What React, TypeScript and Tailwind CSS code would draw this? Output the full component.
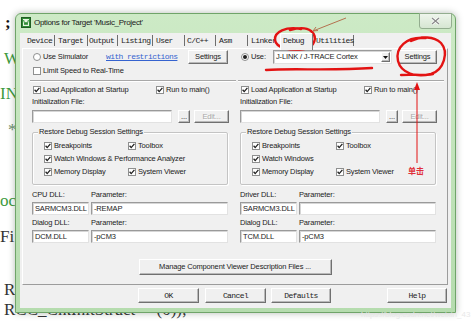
import React from 'react';

const ui = "font-['Liberation_Sans'] text-[7.5px] tracking-[-0.15px] leading-none text-[#1c1c1c] whitespace-nowrap";
const mono = "font-['Liberation_Mono'] text-[8px] tracking-[-0.6px] leading-none text-[#1c1c1c] whitespace-nowrap";
const raised =
  'bg-[#f0f0f0] border border-t-white border-l-white border-r-[#707070] border-b-[#707070] shadow-[inset_-1px_-1px_0_#b9b9b9]';
const sunken =
  'bg-white border border-t-[#9a9a9a] border-l-[#9a9a9a] border-r-[#e2e2e2] border-b-[#e2e2e2] shadow-[inset_1px_1px_0_#d6d6d6]';

function Check() {
  return (
    <span className="flex h-[8px] w-[8px] shrink-0 items-center justify-center border border-[#8e8f8f] bg-white">
      <svg width="6" height="6" viewBox="0 0 6 6">
        <path d="M0.6 2.8 L2.2 4.6 L5.4 0.9" fill="none" stroke="#1f1f1f" strokeWidth="1.3" />
      </svg>
    </span>
  );
}

function Box() {
  return <span className="h-[8px] w-[8px] shrink-0 border border-[#8e8f8f] bg-white" />;
}

function Radio({ on = false }: { on?: boolean }) {
  return (
    <span className="flex h-[8px] w-[8px] shrink-0 items-center justify-center rounded-full border border-[#8e8f8f] bg-white">
      {on && <span className="h-[4px] w-[4px] rounded-full bg-[#1f1f1f]" />}
    </span>
  );
}

function CheckLabel({ children }: { children: React.ReactNode }) {
  return (
    <div className="flex h-[10px] items-center">
      <Check />
      <span className={`${ui} ml-[2px]`}>{children}</span>
    </div>
  );
}

function Button({ className = '', children, text = ui }: { className?: string; children: React.ReactNode; text?: string }) {
  return (
    <div className={`${raised} flex shrink-0 items-center justify-center ${className}`}>
      <span className={text}>{children}</span>
    </div>
  );
}

function Panel({ right = false }: { right?: boolean }) {
  return (
    <div className="flex w-[198px] flex-col">
      {right ? (
        <div className="mt-[1px] flex h-[14px] items-center">
          <span className="ml-[1px]">
            <Radio on />
          </span>
          <span className={`${ui} ml-[2px] w-[22px]`}>Use:</span>
          <div className={`${sunken} flex h-[14px] w-[119px] items-center`}>
            <span className={`${ui} ml-[2px]`}>J-LINK / J-TRACE Cortex</span>
            <span className={`${raised} ml-auto mr-[1px] flex h-[10px] w-[9px] items-center justify-center`}>
              <svg width="5" height="3" viewBox="0 0 5 3">
                <path d="M0 0h5L2.5 3z" fill="#111" />
              </svg>
            </span>
          </div>
          <Button className="ml-[6px] h-[14px] w-[39px]">Settings</Button>
        </div>
      ) : (
        <div className="mt-[1px] flex h-[14px] items-center">
          <span className="ml-[1px]">
            <Radio />
          </span>
          <span className={`${ui} ml-[2px] w-[63px]`}>Use Simulator</span>
          <span className={`${mono} w-[82px] text-[#3563cf] underline`}>with restrictions</span>
          <Button className="h-[14px] w-[40px]">Settings</Button>
        </div>
      )}

      <div className="mt-[2px] flex h-[10px] items-center pl-[1px]">
        {!right && (
          <>
            <Box />
            <span className={`${ui} ml-[2px]`}>Limit Speed to Real-Time</span>
          </>
        )}
      </div>

      <div className="-ml-[2px] mt-[4px] h-[2px] w-[206px] border-t border-b border-t-[#a8a8a8] border-b-white" />

      <div className="mt-[3px] flex h-[10px] items-center pl-[1px]">
        <div className="w-[123px]">
          <CheckLabel>Load Application at Startup</CheckLabel>
        </div>
        <CheckLabel>Run to main()</CheckLabel>
      </div>

      <div className="mt-[2px] flex h-[10px] items-center">
        <span className={ui}>Initialization File:</span>
      </div>

      <div className="mt-[3px] flex h-[13px]">
        <div className={`${sunken} h-[13px] w-[140px]`} />
        <Button className="ml-[6px] h-[13px] w-[12px]">...</Button>
        <Button className="ml-[4px] h-[13px] w-[35px]" text={`${ui} text-[#a8a8a8] [text-shadow:1px_1px_0_#fff]`}>
          Edit...
        </Button>
      </div>

      <div className="relative mt-[9px] w-[196px] rounded-[2px] border border-[#c4c4c4] pb-[7px] pl-[11px] pt-[8px] shadow-[inset_1px_1px_0_#fff,1px_1px_0_#fff]">
        <span className={`${ui} absolute -top-[5px] left-[5px] bg-[#f0f0f0] px-[1px]`}>Restore Debug Session Settings</span>
        <div className="flex">
          <div className="w-[84px]">
            <CheckLabel>Breakpoints</CheckLabel>
          </div>
          <CheckLabel>Toolbox</CheckLabel>
        </div>
        <div className="mt-[3px]">
          <CheckLabel>{right ? 'Watch Windows' : 'Watch Windows & Performance Analyzer'}</CheckLabel>
        </div>
        <div className="mt-[3px] flex">
          <div className="w-[84px]">
            <CheckLabel>Memory Display</CheckLabel>
          </div>
          <CheckLabel>System Viewer</CheckLabel>
        </div>
      </div>

      <div className="mt-[5px] flex h-[10px] items-center">
        <span className={`${ui} w-[59px]`}>{right ? 'Driver DLL:' : 'CPU DLL:'}</span>
        <span className={ui}>Parameter:</span>
      </div>
      <div className="mt-[2px] flex h-[13px]">
        <div className={`${sunken} flex w-[57px] items-center pl-[2px]`}>
          <span className={ui}>SARMCM3.DLL</span>
        </div>
        <div className={`${sunken} ml-[2px] flex w-[137px] items-center pl-[2px]`}>
          <span className={ui}>{right ? '' : '-REMAP'}</span>
        </div>
      </div>

      <div className="mt-[3px] flex h-[10px] items-center">
        <span className={`${ui} w-[59px]`}>Dialog DLL:</span>
        <span className={ui}>Parameter:</span>
      </div>
      <div className="mt-[2px] flex h-[13px]">
        <div className={`${sunken} flex w-[57px] items-center pl-[2px]`}>
          <span className={ui}>{right ? 'TCM.DLL' : 'DCM.DLL'}</span>
        </div>
        <div className={`${sunken} ml-[2px] flex w-[137px] items-center pl-[2px]`}>
          <span className={ui}>-pCM3</span>
        </div>
      </div>
    </div>
  );
}

const tabs: { label: string; cls: string }[] = [
  { label: 'Device', cls: 'w-[29px] pl-[1px]' },
  { label: 'Target', cls: 'w-[33px] pl-[3px]' },
  { label: 'Output', cls: 'w-[30px] pl-[1px]' },
  { label: 'Listing', cls: 'w-[35px] pl-[3px]' },
  { label: 'User', cls: 'w-[32px] pl-[3px]' },
  { label: 'C/C++', cls: 'w-[31px] pl-[2px]' },
  { label: 'Asm', cls: 'w-[32px] pl-[3px]' },
];

function Dialog() {
  return (
    <div className="absolute left-[15px] top-[13px] flex h-[300px] w-[441px] flex-col rounded-t-[6px] border border-[#6fa469] bg-gradient-to-b from-[#cdeac6] to-[#b5dcae] shadow-[0_0_7px_rgba(40,60,40,0.35)]">
      {/* title bar */}
      <div className="flex h-[19px] items-start">
        <svg className="ml-[5px] mt-[3px]" width="10" height="11" viewBox="0 0 10 11">
          <rect x="0.5" y="0.5" width="9" height="10" fill="#2f8b34" stroke="#1f5e22" />
          <rect x="2" y="2" width="6" height="7" fill="#e9f6e4" />
          <path d="M2.6 3 L4 8 L5 5 L6 8 L7.4 3" fill="none" stroke="#2f8b34" strokeWidth="1" />
        </svg>
        <span className="ml-[3px] mt-[5px] whitespace-nowrap font-['Liberation_Sans'] text-[8px] leading-none tracking-[-0.3px] text-[#1a1a1a]">
          Options for Target 'Music_Project'
        </span>
        <div className="-mt-[1px] ml-auto mr-[3px] flex h-[16px] w-[33px] items-center justify-center rounded-b-[3px] border border-[#93ad8f] bg-gradient-to-b from-[#eef5ec] to-[#d6e6d2]">
          <svg width="9" height="8" viewBox="0 0 9 8">
            <path d="M1 1 L8 7 M8 1 L1 7" stroke="#ffffff" strokeWidth="2.6" />
            <path d="M1 1 L8 7 M8 1 L1 7" stroke="#8a8a8a" strokeWidth="1.3" />
          </svg>
        </div>
      </div>

      {/* client */}
      <div className="mx-[4px] flex h-[275px] flex-col bg-[#f0f0f0]">
        <div className="flex h-[15px] items-center pl-[6px]">
          {tabs.map((t) => (
            <div key={t.label} className={`flex h-[11px] items-center border-r border-[#6e6e6e] ${t.cls}`}>
              <span className={mono}>{t.label}</span>
            </div>
          ))}
          <div className="flex h-[11px] w-[32px] items-center pl-[3px]">
            <span className={mono}>Linker</span>
          </div>
          <div className="relative z-10 -mb-[2px] flex h-[17px] w-[33px] items-center self-end rounded-t-[2px] border-t border-l border-r border-t-white border-l-white border-r-[#7a7a7a] bg-[#f0f0f0] pb-[2px] pl-[2px]">
            <span className={mono}>Debug</span>
          </div>
          <div className="flex h-[11px] w-[41px] items-center border-r border-[#6e6e6e] pl-[3px]">
            <span className={mono}>Utilities</span>
          </div>
        </div>

        <div className="ml-[2px] flex h-[237px] w-[426px] flex-col border border-t-white border-l-white border-r-[#9c9c9c] border-b-[#9c9c9c]">
          <div className="flex gap-[10px] pl-[9px]">
            <Panel />
            <Panel right />
          </div>
          <Button className="mx-auto mt-[16px] h-[16px] w-[193px]">Manage Component Viewer Description Files ...</Button>
        </div>

        <div className="flex pt-[3px]">
          <Button className="ml-[118px] h-[15px] w-[61px]" text={mono}>OK</Button>
          <Button className="ml-[6px] h-[15px] w-[61px]" text={mono}>Cancel</Button>
          <Button className="ml-[5px] h-[15px] w-[60px]" text={mono}>Defaults</Button>
          <Button className="ml-[56px] h-[15px] w-[60px]" text={mono}>Help</Button>
        </div>
      </div>
    </div>
  );
}

export default function App() {
  return (
    <div className="relative h-[322px] w-[474px] overflow-hidden bg-white">
      {/* source editor behind the dialog */}
      <div className="pt-[14px] font-['Liberation_Serif'] text-[17px] leading-[17.8px]">
        <div className="h-[17.8px] pl-[5px] font-bold text-[#111]">;</div>
        <div className="h-[17.8px]" />
        <div className="h-[17.8px] pl-[4px] text-[#3d9a3d]">W</div>
        <div className="h-[17.8px]" />
        <div className="h-[17.8px] text-[#3d9a3d]">IN</div>
        <div className="h-[17.8px]" />
        <div className="h-[17.8px] pl-[8px] text-[#6d8f6d]">*</div>
        <div className="h-[17.8px]" />
        <div className="h-[17.8px]" />
        <div className="h-[17.8px]" />
        <div className="h-[17.8px] text-[#3d9a3d]">oc</div>
        <div className="h-[17.8px]" />
        <div className="h-[17.8px] text-[#333]">Fi</div>
        <div className="h-[17.8px]" />
        <div className="h-[17.8px]" />
        <div className="h-[17.8px] pl-[4px] text-[#333]">RCC_OscInitStruct</div>
        <div className="mt-[2px] h-[17.8px] whitespace-pre pl-[4px] text-[#333]">RCC_ClkInitStruct     (0));</div>
      </div>

      <Dialog />

      {/* red pen annotations */}
      <svg className="pointer-events-none absolute left-0 top-0" width="474" height="322" viewBox="0 0 474 322">
        <path d="M346 18 L313 31 M313 31 L318 30.5 M313 31 L316 27" stroke="#b4714f" strokeWidth="1" fill="none" />
        <path
          d="M301 29 C286 26 274 32 275 40 C276 48 290 51 304 49 C315 47 318 37 311 31 C306 27 297 28 290 30"
          fill="none"
          stroke="#e31313"
          strokeWidth="2.4"
          strokeLinecap="round"
        />
        <path d="M266 70 C292 68 330 71 372 68" fill="none" stroke="#e31313" strokeWidth="2.4" strokeLinecap="round" />
        <path
          d="M426 38 C406 36 395 48 398 61 C401 73 416 78 431 74 C444 70 449 52 441 43 C434 36 421 36 411 41 M401 75 C412 74 422 76 433 74"
          fill="none"
          stroke="#e31313"
          strokeWidth="2.4"
          strokeLinecap="round"
        />
        <path d="M417 163 L417 88" stroke="#e31313" strokeWidth="1" />
        <path d="M417 82 L414 90 L420 90 Z" fill="#e31313" />
      </svg>
      <span className="absolute left-[408px] top-[167px] font-['Noto_Sans_CJK_SC',sans-serif] text-[8px] font-bold leading-none text-[#e0303a]">
        单击
      </span>

      <span className="absolute left-[361px] top-[311px] whitespace-nowrap font-['Liberation_Sans'] text-[8px] leading-none text-[#e8e8e8]">
        https://blog.csdn.net/weixin_43
      </span>
    </div>
  );
}
